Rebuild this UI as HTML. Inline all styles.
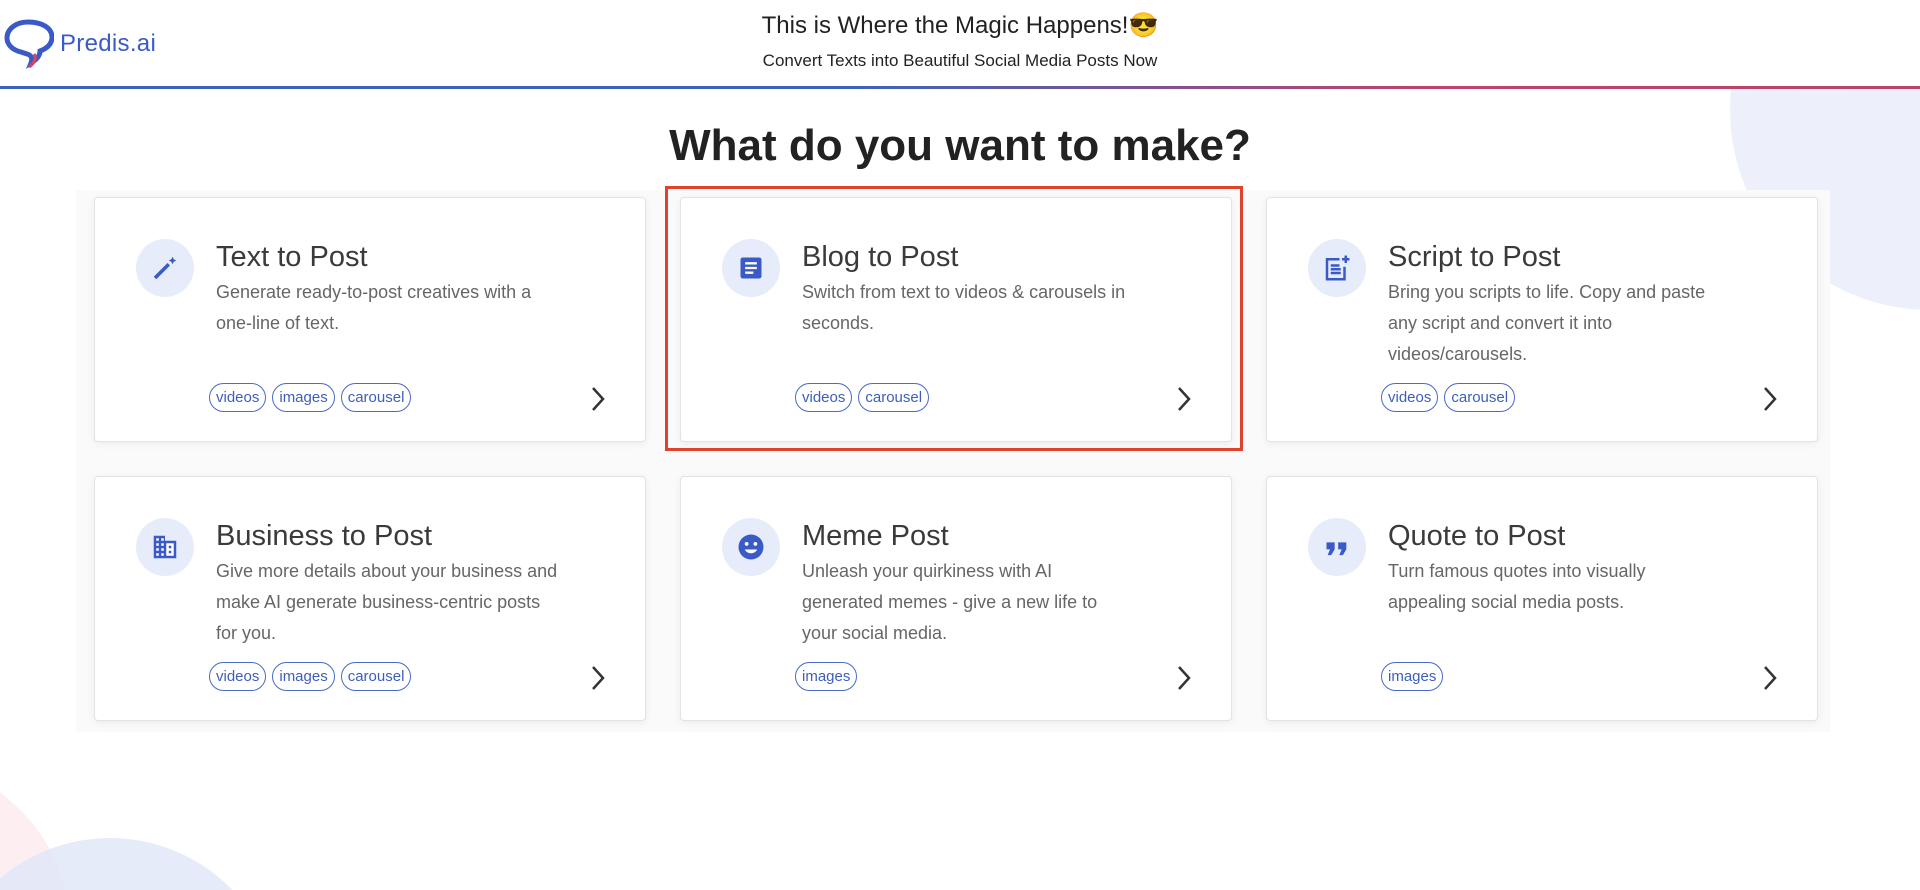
<!DOCTYPE html>
<html style="overflow:hidden;width:1920px;height:890px"><head><meta charset="utf-8"><style>
*{box-sizing:border-box;margin:0;padding:0}
html,body{overflow:hidden}
body{width:1920px;height:890px;background:#fff;font-family:"Liberation Sans",sans-serif;position:relative}
.wrap{position:absolute;left:0;top:0;width:1920px;height:890px;overflow:hidden}
.circ{position:absolute;border-radius:50%}
.hdr{position:absolute;left:0;top:0;width:1920px;height:88px;background:#fff;z-index:2}
.line{position:absolute;left:0;top:86px;width:1920px;height:3px;background:linear-gradient(90deg,#3d63b8 0%,#3d63b8 45%,#c2426a 75%,#b8446a 100%);z-index:3}
.logo{position:absolute;left:4px;top:18px;display:flex;align-items:center}
.logo span{font-size:24px;color:#3a5bc7;margin-left:6px;letter-spacing:.3px}
.t1{position:absolute;top:11px;left:0;width:1920px;text-align:center;font-size:24px;color:#222}
.t2{position:absolute;top:51px;left:0;width:1920px;text-align:center;font-size:17px;color:#222}
h1{position:absolute;top:121px;left:0;width:1920px;text-align:center;font-size:44px;font-weight:bold;color:#222}
.area{position:absolute;left:76px;top:190px;width:1754px;height:542px;background:#fafafa}
.card{position:absolute;width:552px;height:245px;background:#fff;border:1px solid #e3e3e6;border-radius:4px;box-shadow:0 2px 8px rgba(0,0,0,.06)}
.ic{position:absolute;left:41px;top:41px;width:58px;height:58px;border-radius:50%;background:#e6ecf9;display:flex;align-items:center;justify-content:center}
.tt{position:absolute;left:121px;top:43px;font-size:29px;color:#3a3a3a}
.ds{position:absolute;left:121px;top:79px;width:355px;font-size:18px;line-height:31px;color:#666}
.tags{position:absolute;left:114px;top:185px;display:flex;gap:6px}
.tags span{border:1px solid #4a6bc9;color:#3d5fb8;border-radius:15px;font-size:15px;padding:0 6px;height:29px;display:flex;align-items:center}
.chev{position:absolute;left:496px;top:188px}
.red{position:absolute;left:665px;top:186px;width:578px;height:265px;border:3px solid #e0432b}
</style></head><body><div class="wrap">
<div class="circ" style="left:1730px;top:-90px;width:400px;height:400px;background:#edf0fa"></div>
<div class="circ" style="left:-270px;top:760px;width:340px;height:340px;background:#fdeef2"></div>
<div class="circ" style="left:-60px;top:838px;width:340px;height:340px;background:rgba(225,232,248,.85)"></div>
<div class="hdr">
<div class="logo"><svg width="50" height="52" viewBox="0 0 50 52"><path d="M24 4C12 4 3 11 3 20c0 7 6 12 14 14l6 2c4 1 6 4 4 9 5-3 9-7 9-12 8-3 12-8 12-14C48 10 38 4 24 4z" fill="none" stroke="#3a5bc7" stroke-width="5"/><path d="M30 36c3 4 0 10-5 13" stroke="#d9455f" stroke-width="3" fill="none"/></svg><span>Predis.ai</span></div>
<div class="t1">This is Where the Magic Happens!😎</div>
<div class="t2">Convert Texts into Beautiful Social Media Posts Now</div>
</div>
<div class="line"></div>
<h1>What do you want to make?</h1>
<div class="area"></div>

<div class="card" style="left:94px;top:197px"><div class="ic"><svg width="30" height="30" viewBox="0 0 24 24"><path d="M3 20l11-11 2 2-11 11z" fill="#3a5bc7" transform="translate(0,-1)"/><path d="M18 3l1 2 2 1-2 1-1 2-1-2-2-1 2-1z" fill="#3a5bc7"/></svg></div><div class="tt">Text to Post</div><div class="ds">Generate ready-to-post creatives with a one-line of text.</div><div class="tags"><span>videos</span><span>images</span><span>carousel</span></div><svg class="chev" width="14" height="26" viewBox="0 0 14 26"><path d="M2 2l10 11-10 11" fill="none" stroke="#333" stroke-width="2.5"/></svg></div>

<div class="card" style="left:680px;top:197px"><div class="ic"><svg width="28" height="28" viewBox="0 0 24 24"><rect x="3" y="3" width="18" height="18" rx="2" fill="#3a5bc7"/><path d="M7 8h10M7 12h10M7 16h7" stroke="#fff" stroke-width="2"/></svg></div><div class="tt">Blog to Post</div><div class="ds" style="width:375px">Switch from text to videos &amp; carousels in seconds.</div><div class="tags"><span>videos</span><span>carousel</span></div><svg class="chev" width="14" height="26" viewBox="0 0 14 26"><path d="M2 2l10 11-10 11" fill="none" stroke="#333" stroke-width="2.5"/></svg></div>

<div class="card" style="left:1266px;top:197px"><div class="ic"><svg width="30" height="30" viewBox="0 0 24 24"><path d="M14 5H4v16h14V11" fill="none" stroke="#3a5bc7" stroke-width="2"/><path d="M7 10h7M7 13h8M7 16h8M19 2v6M16 5h6" stroke="#3a5bc7" stroke-width="2"/></svg></div><div class="tt">Script to Post</div><div class="ds" style="width:340px">Bring you scripts to life. Copy and paste any script and convert it into videos/carousels.</div><div class="tags"><span>videos</span><span>carousel</span></div><svg class="chev" width="14" height="26" viewBox="0 0 14 26"><path d="M2 2l10 11-10 11" fill="none" stroke="#333" stroke-width="2.5"/></svg></div>

<div class="card" style="left:94px;top:476px"><div class="ic"><svg width="30" height="30" viewBox="0 0 24 24"><path d="M3 3h9v4h9v14H3z" fill="#3a5bc7"/><g fill="#fff"><rect x="5" y="5" width="2" height="2"/><rect x="9" y="5" width="2" height="2"/><rect x="5" y="9" width="2" height="2"/><rect x="9" y="9" width="2" height="2"/><rect x="5" y="13" width="2" height="2"/><rect x="9" y="13" width="2" height="2"/><rect x="5" y="17" width="2" height="2"/><rect x="9" y="17" width="2" height="2"/><rect x="13" y="9" width="6" height="10"/></g><g fill="#3a5bc7"><rect x="15" y="11" width="2" height="2"/><rect x="15" y="15" width="2" height="2"/></g></svg></div><div class="tt">Business to Post</div><div class="ds" style="width:345px">Give more details about your business and make AI generate business-centric posts for you.</div><div class="tags"><span>videos</span><span>images</span><span>carousel</span></div><svg class="chev" width="14" height="26" viewBox="0 0 14 26"><path d="M2 2l10 11-10 11" fill="none" stroke="#333" stroke-width="2.5"/></svg></div>

<div class="card" style="left:680px;top:476px"><div class="ic"><svg width="30" height="30" viewBox="0 0 24 24"><circle cx="12" cy="12" r="10" fill="#3a5bc7"/><circle cx="8.5" cy="9.5" r="1.5" fill="#fff"/><circle cx="15.5" cy="9.5" r="1.5" fill="#fff"/><path d="M7 14c2 4 8 4 10 0z" fill="#fff"/></svg></div><div class="tt">Meme Post</div><div class="ds" style="width:330px">Unleash your quirkiness with AI generated memes - give a new life to your social media.</div><div class="tags"><span>images</span></div><svg class="chev" width="14" height="26" viewBox="0 0 14 26"><path d="M2 2l10 11-10 11" fill="none" stroke="#333" stroke-width="2.5"/></svg></div>

<div class="card" style="left:1266px;top:476px"><div class="ic"><svg width="28" height="28" viewBox="0 0 24 24"><path d="M3 8h7v6l-3 5H4l2-5H3zM13 8h7v6l-3 5h-3l2-5h-3z" fill="#3a5bc7"/></svg></div><div class="tt">Quote to Post</div><div class="ds" style="width:320px">Turn famous quotes into visually appealing social media posts.</div><div class="tags"><span>images</span></div><svg class="chev" width="14" height="26" viewBox="0 0 14 26"><path d="M2 2l10 11-10 11" fill="none" stroke="#333" stroke-width="2.5"/></svg></div>

<div class="red"></div>
</div></body></html>
